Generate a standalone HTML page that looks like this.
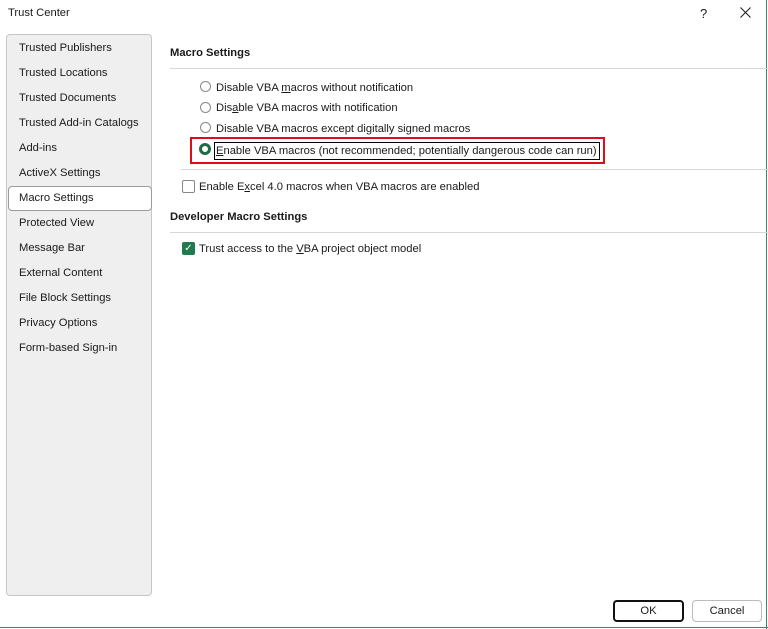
<!DOCTYPE html><html><head><style>
body{margin:0;width:768px;height:629px;background:#fff;font-family:"Liberation Sans",sans-serif;font-size:11.2px;color:#1a1a1a;position:relative;overflow:hidden}
.a{position:absolute;white-space:nowrap}
.side{position:absolute;left:6px;top:34px;width:144px;height:560px;background:#efefef;border:1px solid #c6c6c6;border-radius:4px}
.it{position:absolute;left:12px}
.sel{position:absolute;left:1px;top:151px;width:142px;height:23px;background:#fff;border:1px solid #9a9a9a;border-radius:4px}
.hr{position:absolute;height:1px;background:#d8d8d8}
.rad{position:absolute;width:9px;height:9px;border:1px solid #888;border-radius:50%;background:#fff}
.btn{position:absolute;top:600px;width:68px;height:20px;border:1px solid #bbb;border-radius:4px;text-align:center;line-height:20px;background:#fff}
b{font-weight:bold}
</style></head><body>
<div class="a" style="left:8px;top:7px">Trust Center</div>
<div class="a" style="left:700px;top:6px;font-size:13px">?</div>
<svg style="position:absolute;left:740px;top:7px" width="11" height="11"><path d="M0.5 0.5L10.5 10.5M10.5 0.5L0.5 10.5" stroke="#222" stroke-width="1.1"/></svg>
<div style="position:absolute;right:1px;top:0;width:1px;height:629px;background:#3a8a6a"></div>
<div style="position:absolute;left:0;bottom:1px;width:768px;height:1px;background:#3a8a6a"></div>
<div class="side">
<div class="sel"></div>
<div class="it" style="top:7px">Trusted Publishers</div>
<div class="it" style="top:32px">Trusted Locations</div>
<div class="it" style="top:57px">Trusted Documents</div>
<div class="it" style="top:82px">Trusted Add-in Catalogs</div>
<div class="it" style="top:107px">Add-ins</div>
<div class="it" style="top:132px">ActiveX Settings</div>
<div class="it" style="top:157px">Macro Settings</div>
<div class="it" style="top:182px">Protected View</div>
<div class="it" style="top:207px">Message Bar</div>
<div class="it" style="top:232px">External Content</div>
<div class="it" style="top:257px">File Block Settings</div>
<div class="it" style="top:282px">Privacy Options</div>
<div class="it" style="top:307px">Form-based Sign-in</div>
</div>
<div class="a" style="left:170px;top:47px"><b>Macro Settings</b></div>
<div class="hr" style="left:170px;top:68px;width:606px"></div>
<div class="rad" style="left:200px;top:81px"></div><div class="a" style="left:216px;top:82px">Disable VBA <u>m</u>acros without notification</div>
<div class="rad" style="left:200px;top:102px"></div><div class="a" style="left:216px;top:102px">Dis<u>a</u>ble VBA macros with notification</div>
<div class="rad" style="left:200px;top:122px"></div><div class="a" style="left:216px;top:123px">Disable VBA macros except di<u>g</u>itally signed macros</div>
<div style="position:absolute;left:190px;top:137px;width:411px;height:23px;border:2px solid #d9101a"></div>
<div style="position:absolute;left:199px;top:143px;width:6px;height:6px;border:3px solid #1f6b45;border-radius:50%;background:#fff"></div>
<div class="a" style="left:214px;top:142px;border:1px solid #000;padding:1px 2px 1px 1px;line-height:14px"><u>E</u>nable VBA macros (not recommended; potentially dangerous code can run)</div>
<div class="hr" style="left:181px;top:169px;width:595px"></div>
<div style="position:absolute;left:182px;top:180px;width:11px;height:11px;border:1px solid #888;border-radius:2px"></div>
<div class="a" style="left:199px;top:181px">Enable E<u>x</u>cel 4.0 macros when VBA macros are enabled</div>
<div class="a" style="left:170px;top:211px"><b>Developer Macro Settings</b></div>
<div class="hr" style="left:170px;top:232px;width:606px"></div>
<div style="position:absolute;left:182px;top:242px;width:13px;height:13px;background:#1f7a4d;border-radius:2px;color:#fff;font-size:10px;line-height:13px;text-align:center">✓</div>
<div class="a" style="left:199px;top:243px">Trust access to the <u>V</u>BA project object model</div>
<div class="btn" style="left:613px;border:2px solid #111;height:18px;line-height:18px;width:67px">OK</div>
<div class="btn" style="left:692px">Cancel</div>
</body></html>
